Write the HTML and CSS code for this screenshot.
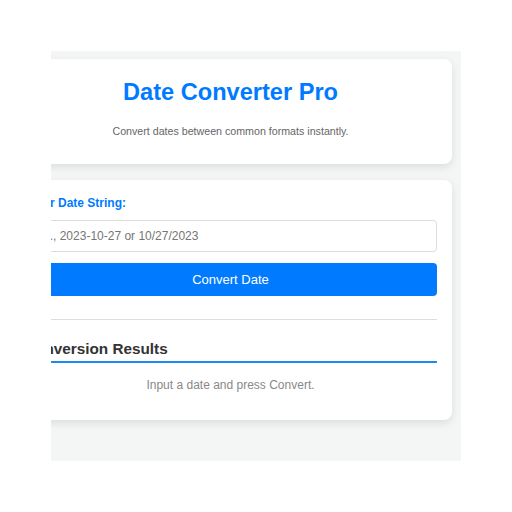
FILE: index.html
```html
<!DOCTYPE html>
<html lang="en">
<head>
<meta charset="utf-8">
<title>Date Converter Pro</title>
<link rel="stylesheet" href="styles.css">
</head>
<body>
<div class="stage">
  <div class="frame">
    <div class="column">
      <header class="card header-card">
        <h1 class="title">Date Converter Pro</h1>
        <p class="subtitle">Convert dates between common formats instantly.</p>
      </header>
      <main class="card main-card">
        <label class="field-label" for="dateInput">Enter Date String:</label>
        <input class="date-input" id="dateInput" type="text" placeholder="e.g., 2023-10-27 or 10/27/2023">
        <button class="convert-btn" type="button">Convert Date</button>
        <hr class="divider">
        <h2 class="results-title">Conversion Results</h2>
        <p class="hint">Input a date and press Convert.</p>
      </main>
    </div>
  </div>
</div>
</body>
</html>
```
FILE: styles.css
```css
* { box-sizing: border-box; }
html, body { margin: 0; padding: 0; background: #ffffff; }
body { font-family: "Liberation Sans", Arial, sans-serif; }

.stage { padding: 51px; }

.frame {
  width: 410px;
  height: 410px;
  background: #f4f5f5;
  overflow: hidden;
  padding-top: 8px;
}

.column {
  width: 443px;
  margin-left: -42px;
  display: flex;
  flex-direction: column;
  gap: 16px;
}

.card {
  background: #ffffff;
  border-radius: 8px;
  box-shadow: 0 3px 8px rgba(0, 0, 0, 0.1);
}

.header-card {
  height: 105px;
  padding: 19px 15px 0;
  text-align: center;
}

.title {
  margin: 0;
  font-size: 23.6px;
  line-height: 28px;
  font-weight: bold;
  color: #007bff;
}

.subtitle {
  margin: 17px 0 0;
  font-size: 10.67px;
  line-height: 16px;
  color: #666666;
}

.main-card {
  height: 240px;
  padding: 16px 15px 0;
  display: flex;
  flex-direction: column;
}

.field-label {
  font-size: 12px;
  line-height: 14px;
  font-weight: bold;
  color: #007bff;
}

.date-input {
  margin-top: 10px;
  height: 32px;
  border: 1px solid #dddddd;
  border-radius: 4px;
  padding: 0 8px;
  font-family: "Liberation Sans", Arial, sans-serif;
  font-size: 12px;
  color: #333333;
  background: #ffffff;
}
.date-input::placeholder { color: #757575; }

.convert-btn {
  margin-top: 11px;
  height: 33px;
  border: none;
  border-radius: 4px;
  background: #007bff;
  color: #ffffff;
  font-family: "Liberation Sans", Arial, sans-serif;
  font-size: 13px;
}

.divider {
  margin: 23px 0 0;
  border: none;
  border-top: 1px solid #dddddd;
  height: 0;
}

.results-title {
  margin: 20px 0 0;
  font-size: 15.3px;
  line-height: 18px;
  font-weight: bold;
  color: #333333;
  padding-bottom: 3px;
  border-bottom: 2px solid #1e88f5;
}

.hint {
  margin: 15px 0 0;
  font-size: 12px;
  line-height: 14px;
  color: #888888;
  text-align: center;
}
```
